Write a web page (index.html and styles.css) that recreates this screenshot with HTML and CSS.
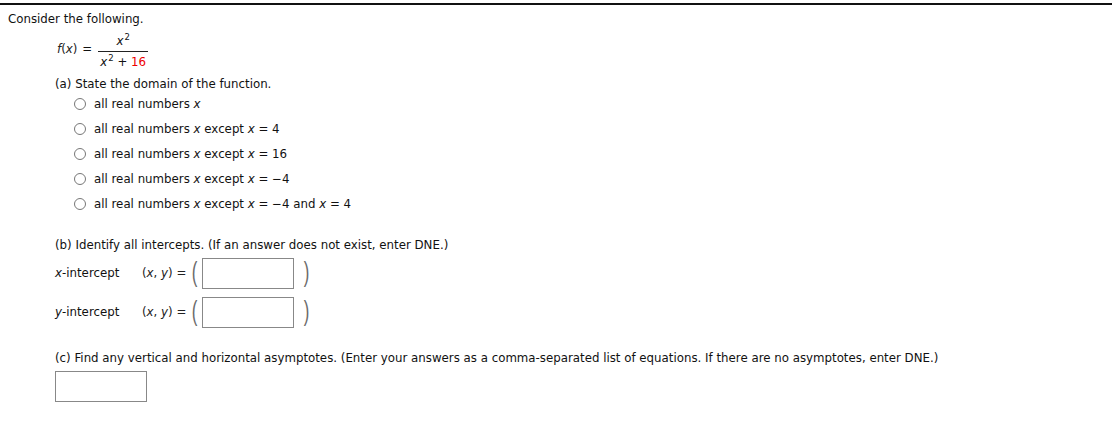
FILE: index.html
```html
<!DOCTYPE html>
<html>
<head>
<meta charset="utf-8">
<link rel="stylesheet" href="styles.css">
</head>
<body>
<div class="topline"></div>
<div class="page">
  <p class="intro">Consider the following.</p>
  <div class="formula">
    <span class="fx"><i>f</i>(<i>x</i>)</span>
    <span class="eq">=</span>
    <span class="frac">
      <span class="num"><i>x</i><sup>2</sup></span>
      <span class="den"><i>x</i><sup>2</sup> + <span class="red">16</span></span>
    </span>
  </div>
  <div class="part">
    <p class="q">(a) State the domain of the function.</p>
    <ul class="opts">
      <li><span class="radio"></span><span>all real numbers <i>x</i></span></li>
      <li><span class="radio"></span><span>all real numbers <i>x</i> except <i>x</i> = 4</span></li>
      <li><span class="radio"></span><span>all real numbers <i>x</i> except <i>x</i> = 16</span></li>
      <li><span class="radio"></span><span>all real numbers <i>x</i> except <i>x</i> = &minus;4</span></li>
      <li><span class="radio"></span><span>all real numbers <i>x</i> except <i>x</i> = &minus;4 and <i>x</i> = 4</span></li>
    </ul>
    <p class="q qb">(b) Identify all intercepts. (If an answer does not exist, enter DNE.)</p>
    <div class="irow">
      <span class="ilabel"><i>x</i>-intercept</span>
      <span class="xy">(<i>x</i>, <i>y</i>) =</span>
      <span class="paren pl"><span class="pg">(</span></span><span class="box"></span><span class="paren pr"><span class="pg">)</span></span>
    </div>
    <div class="irow">
      <span class="ilabel"><i>y</i>-intercept</span>
      <span class="xy">(<i>x</i>, <i>y</i>) =</span>
      <span class="paren pl"><span class="pg">(</span></span><span class="box"></span><span class="paren pr"><span class="pg">)</span></span>
    </div>
    <p class="q qc">(c) Find any vertical and horizontal asymptotes. (Enter your answers as a comma-separated list of equations. If there are no asymptotes, enter DNE.)</p>
    <div class="box wide"></div>
  </div>
</div>
</body>
</html>
```
FILE: styles.css
```css
html, body {
  margin: 0;
  padding: 0;
  background: #fff;
}
body {
  font-family: "DejaVu Sans", Verdana, sans-serif;
  font-size: 11.8px;
  color: #111;
}
.topline {
  margin-top: 3px;
  height: 2px;
  background: #111;
}
.page {
  padding: 0 8px;
}
p {
  margin: 0;
}
.intro {
  padding-top: 6px;
  line-height: 16px;
}
.formula {
  display: flex;
  align-items: center;
  margin-left: 49px;
  margin-top: 5px;
  height: 38px;
}
.fx {
  color: #222;
  margin-top: -4px;
}
.eq {
  margin: -4px 6px 0 5px;
}
.frac {
  display: inline-flex;
  flex-direction: column;
  align-items: center;
}
.num {
  padding: 0 2px 2px;
  line-height: 16px;
}
.den {
  border-top: 1px solid #222;
  padding: 2px 2px 0;
  line-height: 16px;
}
sup {
  font-size: 8.5px;
  vertical-align: 5px;
  line-height: 0;
  margin-left: 1px;
}
.red {
  color: #e00;
}
.part {
  margin-left: 47px;
}
.q {
  line-height: 14px;
  margin-top: 7px;
}
.opts {
  list-style: none;
  margin: 6px 0 0 0;
  padding: 0 0 0 19px;
  display: flex;
  flex-direction: column;
  gap: 11px;
}
.opts li {
  display: flex;
  align-items: center;
  height: 14px;
}
.radio {
  width: 10px;
  height: 10px;
  border: 1px solid #777;
  border-radius: 50%;
  margin-right: 8px;
  flex: none;
}
.qb {
  margin-top: 27px;
}
.irow {
  display: flex;
  align-items: center;
  height: 32px;
  margin-top: 5px;
}
.irow + .irow {
  margin-top: 7px;
}
.ilabel {
  width: 87px;
  flex: none;
}
.xy {
  color: #222;
}
.paren {
  display: flex;
  justify-content: center;
  align-items: center;
  width: 6px;
  height: 32px;
  flex: none;
}
.pg {
  font-family: "Liberation Sans", sans-serif;
  font-size: 28px;
  line-height: 28px;
  color: #6a6a6a;
  transform: scaleX(0.6);
  margin-top: -3px;
}
.pl {
  margin: 0 5px 0 5px;
}
.pr {
  margin-left: 9px;
}
.box {
  display: block;
  width: 90px;
  height: 29px;
  border: 1px solid #888;
  background: #fff;
  flex: none;
}
.qc {
  margin-top: 23px;
}
.wide {
  margin-top: 6px;
  height: 29px;
}
```
